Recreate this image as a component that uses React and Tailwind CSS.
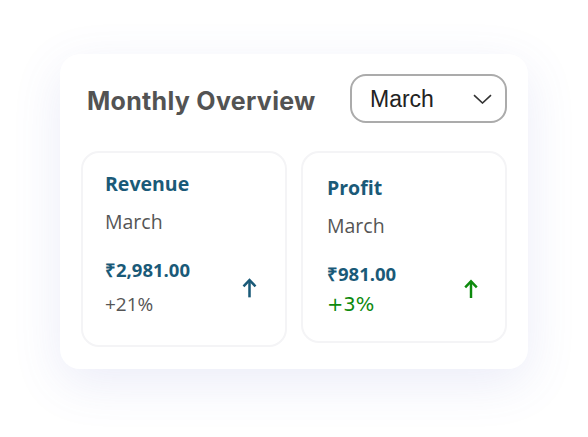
const stats = [
  {
    title: 'Revenue',
    month: 'March',
    amount: '₹2,981.00',
    change: '+21%',
    tone: 'blue',
  },
  {
    title: 'Profit',
    month: 'March',
    amount: '₹981.00',
    change: '+3%',
    tone: 'green',
  },
]

function UpArrow({ className }) {
  return (
    <svg viewBox="0 0 16 21" className={className} fill="none" stroke="currentColor" strokeWidth="2.7">
      <path d="M8 21V2.5" />
      <path d="M1.6 9.2 8 2.6 14.4 9.2" />
    </svg>
  )
}

function Chevron({ className }) {
  return (
    <svg viewBox="0 0 19 10" className={className} fill="none" stroke="currentColor" strokeWidth="1.6">
      <path d="M1 1.2 9.5 9 18 1.2" />
    </svg>
  )
}

function StatCard({ stat }) {
  const isGreen = stat.tone === 'green'

  return (
    <div
      className={
        isGreen
          ? 'rounded-[18px] border-2 border-[#f4f4f6] bg-white pl-[24px] pr-[26px] pt-[21px] pb-[25px]'
          : 'rounded-[18px] border-2 border-[#f4f4f6] bg-white pl-[22px] pr-[28px] pt-[17px] pb-[27px]'
      }
    >
      <p className="text-[19.5px] leading-[28px] font-bold text-[#1a5a78]">{stat.title}</p>
      <p className="mt-[10px] text-[19.5px] leading-[28px] text-[#555]">{stat.month}</p>

      <div className="mt-[21px] flex items-center justify-between">
        <div>
          <p className="text-[18.5px] leading-[26px] font-bold text-[#1a5a78]">{stat.amount}</p>
          {isGreen ? (
            <p className="mt-[7px] font-['DejaVu_Sans',sans-serif] text-[19.5px] leading-[22px] text-[#0d8a0d]">
              {stat.change}
            </p>
          ) : (
            <p className="mt-[7px] text-[19px] leading-[28px] text-[#555]">{stat.change}</p>
          )}
        </div>
        {isGreen ? (
          <UpArrow className="h-[19px] w-[16px] text-[#0d8a0d]" />
        ) : (
          <UpArrow className="h-[21px] w-[15px] text-[#1a5a78]" />
        )}
      </div>
    </div>
  )
}

export default function App() {
  return (
    <div className="min-h-[437px] w-[588px] bg-white pl-[60px] pt-[54px] font-['Open_Sans',sans-serif]">
      <section className="w-[468px] rounded-[20px] bg-white px-[21px] pt-[20px] pb-[22px] shadow-[0_14px_50px_rgba(90,100,200,0.12)]">
        <div className="flex items-start justify-between">
          <h2 className="ml-[6px] mt-[12px] font-['Inter',sans-serif] text-[25px] leading-[30px] font-bold tracking-[0.3px] text-[#535353]">
            Monthly Overview
          </h2>
          <button
            type="button"
            className="flex h-[49px] w-[157px] items-center justify-between rounded-[16px] border-2 border-[#ababab] bg-white pl-[18px] pr-[13px] font-['Liberation_Sans',Arial,sans-serif] text-[23px] leading-[28px] text-[#222]"
          >
            March
            <Chevron className="h-[10px] w-[19px] text-[#333]" />
          </button>
        </div>

        <div className="mt-[28px] grid grid-cols-2 items-start gap-[14px]">
          {stats.map((stat) => (
            <StatCard key={stat.title} stat={stat} />
          ))}
        </div>
      </section>
    </div>
  )
}
